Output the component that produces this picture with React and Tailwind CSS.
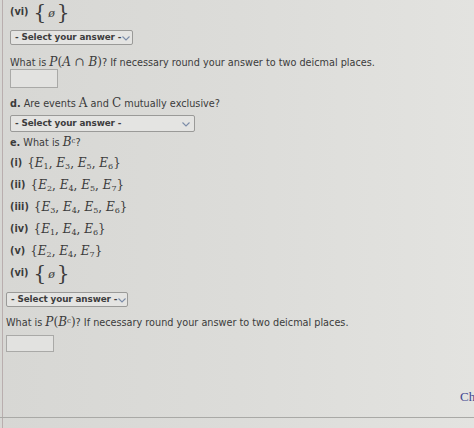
import React from "react";

const Sel = ({ w, h = "h-[15px]" }) => (
  <div className={`flex items-center justify-between ${h} ${w} border border-[#9a9a98] rounded-[2px] bg-[#e4e4e2] pl-[4px] pr-[3px]`}>
    <span className="text-[8.8px] font-bold text-[#3d3d3d] leading-none whitespace-nowrap tracking-[-0.1px]">- Select your answer -</span>
    <svg width="10" height="8" viewBox="0 0 10 8" className="shrink-0">
      <path d="M1.5 2.5 L5 6 L8.5 2.5" fill="none" stroke="#7b8ca8" strokeWidth="1.1" />
    </svg>
  </div>
);

const E = ({ n }) => (
  <>
    <i>E</i>
    <sub className="text-[8px] not-italic">{n}</sub>
  </>
);

const Set = ({ items }) => (
  <span className="font-['DejaVu_Serif',serif] text-[12px] whitespace-nowrap">
    {"{"}
    {items.map((n, i) => (
      <span key={i}>
        <E n={n} />
        {i < items.length - 1 ? ", " : ""}
      </span>
    ))}
    {"}"}
  </span>
);

const Opt = ({ label, items }) => (
  <div className="flex items-center gap-[5px] h-[22px]">
    <span className="font-bold text-[9.7px]">{label}</span>
    <Set items={items} />
  </div>
);

const Empty = () => (
  <div className="flex items-center gap-[5px] h-[22px]">
    <span className="font-bold text-[9.7px]">(vi)</span>
    <span className="font-['DejaVu_Serif',serif] text-[20px] leading-none">
      {"{"}
      <span className="text-[11px] italic align-middle px-[2px]">ø</span>
      {"}"}
    </span>
  </div>
);

const Line = ({ children, mt }) => (
  <div className={`${mt} h-[14px] leading-[14px] whitespace-nowrap flex items-baseline`}>{children}</div>
);

export default function App() {
  return (
    <div className="w-[474px] h-[428px] overflow-hidden relative bg-linear-to-r from-[#d7d7d4] via-[#dcdcd9] to-[#e3e3e0] font-['DejaVu_Sans',sans-serif] text-[#3b3b3b] text-[9.7px]">
      <div className="absolute left-[2px] top-0 bottom-0 w-[1px] bg-[#b9aeae]" />
      <div className="absolute left-0 right-0 top-[417px] h-[1px] bg-[#a9a9a6]" />
      <div className="absolute left-[460px] top-[387px] text-[13px] text-[#3f4690] font-['Liberation_Serif',serif] whitespace-nowrap">Ch</div>

      <div className="pl-[10px] pt-[1px] flex flex-col">
        <Empty />
        <div className="mt-[7px]">
          <Sel w="w-[123px]" />
        </div>
        <Line mt="mt-[10px]">
          <span>What is&nbsp;</span>
          <span className="font-['DejaVu_Serif',serif] text-[12px]"><i>P</i>(<i>A</i> ∩ <i>B</i>)</span>
          <span>? If necessary round your answer to two deicmal places.</span>
        </Line>
        <div className="w-[48px] h-[19px] border border-[#a9a9a7] bg-[#e2e2e0]" />
        <Line mt="mt-[8px]">
          <span className="font-bold">d.</span>&nbsp;Are events&nbsp;<span className="font-['DejaVu_Serif',serif] text-[12px]">A</span>&nbsp;and&nbsp;<span className="font-['DejaVu_Serif',serif] text-[12px]">C</span>&nbsp;mutually exclusive?
        </Line>
        <div className="mt-[5px]">
          <Sel w="w-[185px]" h="h-[17px]" />
        </div>
        <Line mt="mt-[3px]">
          <span className="font-bold">e.</span>&nbsp;What is&nbsp;<span className="font-['DejaVu_Serif',serif] text-[12px]"><i>B</i><sup className="text-[7px]">c</sup></span>?
        </Line>
        <div className="mt-[3px] flex flex-col">
          <Opt label="(i)" items={[1, 3, 5, 6]} />
          <Opt label="(ii)" items={[2, 4, 5, 7]} />
          <Opt label="(iii)" items={[3, 4, 5, 6]} />
          <Opt label="(iv)" items={[1, 4, 6]} />
          <Opt label="(v)" items={[2, 4, 7]} />
        </div>
        <Empty />
      </div>

      <div className="pl-[6px] flex flex-col">
        <div className="mt-[8px]">
          <Sel w="w-[122px]" />
        </div>
        <Line mt="mt-[8px]">
          <span>What is&nbsp;</span>
          <span className="font-['DejaVu_Serif',serif] text-[12px]"><i>P</i>(<i>B</i><sup className="text-[7px]">c</sup>)</span>
          <span>? If necessary round your answer to two deicmal places.</span>
        </Line>
        <div className="mt-[6px] w-[48px] h-[17px] border border-[#a9a9a7] bg-[#e2e2e0]" />
      </div>
    </div>
  );
}
